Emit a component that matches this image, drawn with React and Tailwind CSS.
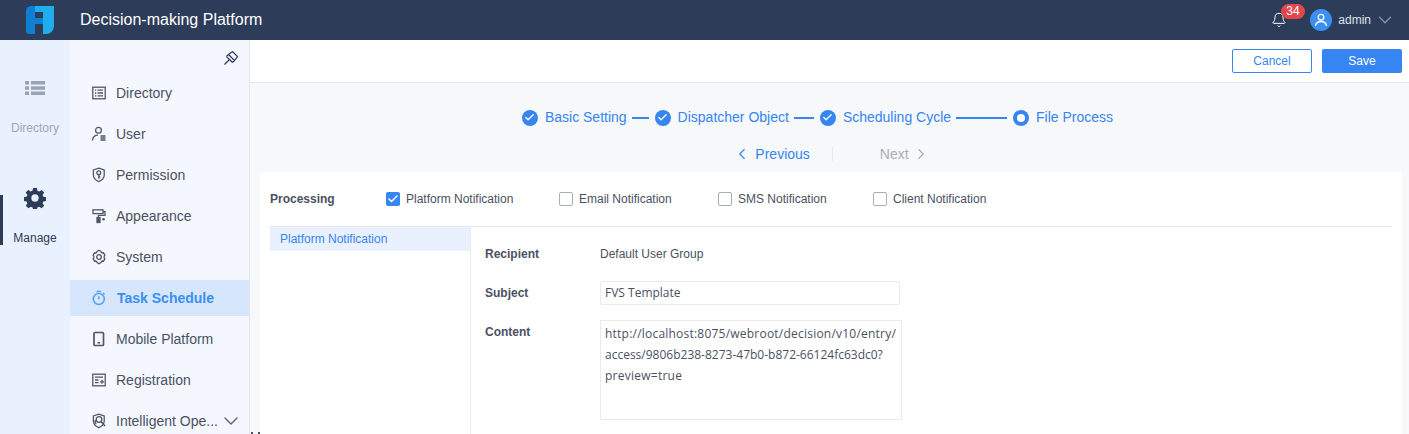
import { ChevronDown, ChevronLeft, ChevronRight, Check, Bell } from "lucide-react";

const navItems = [
  { label: "Directory", icon: "directory" },
  { label: "User", icon: "user" },
  { label: "Permission", icon: "permission" },
  { label: "Appearance", icon: "appearance" },
  { label: "System", icon: "system" },
  { label: "Task Schedule", icon: "timer", active: true },
  { label: "Mobile Platform", icon: "mobile" },
  { label: "Registration", icon: "registration" },
  { label: "Intelligent Ope...", icon: "intelligent", arrow: true },
];

const steps = [
  { label: "Basic Setting", line: "w-[17px]" },
  { label: "Dispatcher Object", line: "w-[20px]" },
  { label: "Scheduling Cycle", line: "w-[51px]" },
];

function NavIcon({ name }) {
  const common = { width: 16, height: 16, viewBox: "0 0 16 16", fill: "none", stroke: "currentColor", strokeWidth: 1.3 };
  if (name === "directory")
    return (
      <svg {...common}>
        <rect x="1.800" y="2.200" width="12.400" height="11.600" />
        <path d="M4 5.200h1.300M6.500 5.200H12M4 8h1.300M6.500 8H12M4 10.800h1.300M6.500 10.800H12" />
      </svg>
    );
  if (name === "user")
    return (
      <svg {...common}>
        <circle cx="7.500" cy="4.200" r="2.900" />
        <path d="M1.500 14.500c.3-3.400 2.400-5.400 5.500-5.400M9.500 10h5M9.500 12h5M9.500 14h5" />
      </svg>
    );
  if (name === "permission")
    return (
      <svg {...common}>
        <path d="M7.800 1.200l5.400 1.700v5.300c0 3-2.300 5-5.400 6.500-3.100-1.500-5.400-3.500-5.400-6.500V2.900z" />
        <circle cx="7.800" cy="5.800" r="1.900" />
        <path d="M7.800 7.700v4M7.800 9.800h1.600" />
      </svg>
    );
  if (name === "appearance")
    return (
      <svg {...common}>
        <rect x="2" y="1.800" width="10" height="3.800" />
        <path d="M12 3.600h2v3.800H7.500v2.200" />
        <rect x="6" y="9.500" width="3" height="5" fill="currentColor" />
        <circle cx="12.500" cy="11.300" r="1.300" fill="currentColor" stroke="none" />
      </svg>
    );
  if (name === "system")
    return (
      <svg {...common}>
        <path d="M8 1.300l2 1.100.3 1 1 .6 1.200-.2 1.400 2.400-.7 1v1.600l.7 1-1.400 2.400-1.200-.2-1 .6-.3 1-2 1.100-2-1.100-.3-1-1-.6-1.200.2-1.400-2.400.7-1V7.200l-.7-1 1.400-2.400 1.200.2 1-.6.3-1z" />
        <circle cx="8" cy="8" r="2.300" />
      </svg>
    );
  if (name === "timer")
    return (
      <svg {...common}>
        <circle cx="7.800" cy="9" r="5.500" strokeWidth="1.500" />
        <path d="M5.500 1.500h4.600M12 3l1.500 1.500M7.800 6.200v3" strokeWidth="1.500" />
      </svg>
    );
  if (name === "mobile")
    return (
      <svg {...common}>
        <rect x="3" y="1.500" width="9.500" height="13" rx="1" strokeWidth="1.700" />
        <path d="M6.500 11.800h2.500" strokeWidth="1.500" />
      </svg>
    );
  if (name === "registration")
    return (
      <svg {...common}>
        <rect x="1.800" y="2.200" width="12.400" height="11.600" />
        <path d="M4 5.200h8M4 8h3.500M4 10.700h3.500M9 9.800h4M11 7.800v4" />
      </svg>
    );
  return (
    <svg {...common}>
      <path d="M7.800 1.200l5.400 1.700v5.300c0 3-2.300 5-5.400 6.500-3.100-1.500-5.400-3.500-5.400-6.500V2.900z" />
      <circle cx="8" cy="6.500" r="2.800" />
      <path d="M10 8.600l4 4.400M5 11c-.8-1-1-2.400-.7-3.800" strokeWidth="1.500" />
    </svg>
  );
}

function StepDot({ done }) {
  return (
    <span className="flex h-[16px] w-[16px] items-center justify-center rounded-full bg-[#3685f2]">
      {done ? <Check className="h-[11px] w-[11px] text-white" strokeWidth={3} /> : <span className="h-[8px] w-[8px] rounded-full bg-white" />}
    </span>
  );
}

function CheckOption({ label, checked, className }) {
  return (
    <label className={"flex items-center " + className}>
      {checked ? (
        <span className="flex h-[14px] w-[14px] items-center justify-center rounded-[2px] bg-[#3685f2]">
          <Check className="h-[12px] w-[12px] text-white" strokeWidth={3} />
        </span>
      ) : (
        <span className="h-[14px] w-[14px] rounded-[2px] border border-[#a8adb8] bg-white" />
      )}
      <span className="ml-[6px] text-[12px] text-[#4a5162]">{label}</span>
    </label>
  );
}

export default function App() {
  return (
    <div className="flex h-[434px] w-[1409px] flex-col overflow-hidden bg-[#f7f8fa] font-['Liberation_Sans',Arial,sans-serif]">
      {/* Header */}
      <header className="flex h-10 shrink-0 items-center bg-[#2c3c59] pr-[13px] text-white">
        <svg className="ml-[26px]" width="28" height="28" viewBox="0 0 28 28">
          <path d="M5 0h4v28H3a3 3 0 0 1-3-3V5a5 5 0 0 1 5-5z" fill="#0f7fd3" />
          <path d="M9 12h8v6H9z" fill="#0f7fd3" />
          <path d="M9 0h19v20a8 8 0 0 1-8 8h-3V6H9z" fill="#1eaeee" />
        </svg>
        <span className="ml-[26px] text-[16px]">Decision-making Platform</span>
        <div className="ml-auto flex items-center">
          <div className="relative mr-[23px]">
            <Bell className="h-[16px] w-[16px] text-white" strokeWidth={1.5} />
            <span className="absolute -top-[8px] left-[10px] rounded-full bg-[#e2474c] px-[5px] text-[12px] leading-[15px] text-white">34</span>
          </div>
          <span className="flex h-[22px] w-[22px] items-center justify-center rounded-full bg-[#3a8ff0]">
            <svg width="14" height="14" viewBox="0 0 14 14" fill="none" stroke="white" strokeWidth="1.300">
              <circle cx="7" cy="4.200" r="2.800" />
              <path d="M1.500 13c.4-3 2.600-4.500 5.500-4.500s5.100 1.500 5.500 4.500" />
            </svg>
          </span>
          <span className="ml-[6px] text-[12px] text-[#dfe3ea]">admin</span>
          <ChevronDown className="ml-[3px] h-[22px] w-[22px] text-[#8b95a8]" strokeWidth={1.4} />
        </div>
      </header>

      <div className="flex min-h-0 flex-1">
        {/* Rail */}
        <aside className="flex w-[70px] shrink-0 flex-col bg-[#eaf1fe] pt-[40px]">
          <div className="flex flex-col items-center">
            <svg width="20" height="16" viewBox="0 0 20 16" fill="#9aa3b5">
              <rect x="0" y="1" width="4" height="3.500" />
              <rect x="6" y="1" width="14" height="3.500" />
              <rect x="0" y="6.300" width="4" height="3.500" />
              <rect x="6" y="6.300" width="14" height="3.500" />
              <rect x="0" y="11.500" width="4" height="3.500" />
              <rect x="6" y="11.500" width="14" height="3.500" />
            </svg>
            <span className="mt-[23px] text-[12px] text-[#a0a6b3]">Directory</span>
          </div>
          <div className="relative mt-[50px] flex flex-col items-center">
            <span className="absolute left-0 top-[8px] h-[50px] w-[3px] bg-[#2c3c59]" />
            <svg width="22" height="22" viewBox="0 0 24 24" fill="#2c3c59">
              <path fillRule="evenodd" d="M10 1h4l.6 3 2 .9 2.600-1.700 2.800 2.800-1.700 2.600.9 2 3 .6v4l-3 .6-.9 2 1.700 2.600-2.800 2.800-2.600-1.700-2 .9-.6 3h-4l-.6-3-2-.9-2.600 1.700-2.800-2.800 1.700-2.600-.9-2-3-.6v-4l3-.6.9-2L1.800 6l2.800-2.800 2.600 1.700 2-.9zM12 8a4 4 0 1 0 0 8 4 4 0 0 0 0-8z" />
            </svg>
            <span className="mt-[20px] text-[12px] text-[#2c3c59]">Manage</span>
          </div>
        </aside>

        {/* Menu */}
        <nav className="w-[180px] shrink-0 border-r border-[#e4e7ec] bg-[#f4f7fe]">
          <div className="flex h-[35px] items-center justify-end pr-[10px]">
            <svg width="16" height="16" viewBox="0 0 16 16" fill="none" stroke="#2c3c59" strokeWidth="1.200">
              <path d="M5.500 4.500L9.500 1.500l5 5-3 4zM3.500 6.500l6 6M5.500 4.500l-2 2M11.500 10.500l-2 2M6 10l-4.500 4.500M5.500 4.500l6 6" />
            </svg>
          </div>
          <ul className="flex flex-col gap-[5px]">
            {navItems.map((item) => (
              <li
                key={item.label}
                className={
                  "flex h-9 items-center pl-[21px] text-[14px] " +
                  (item.active ? "bg-[#d5e6fd] font-bold text-[#3a8ff0]" : "text-[#4a5162]")
                }
              >
                <span className={item.active ? "text-[#5aa2f3]" : "text-[#4f5668]"}>
                  <NavIcon name={item.icon} />
                </span>
                <span className={(item.active ? "ml-[10px]" : "ml-[9px]") + " whitespace-nowrap"}>{item.label}</span>
                {item.arrow && <ChevronDown className="ml-[1px] h-[24px] w-[24px] text-[#5a6172]" strokeWidth={1.4} />}
              </li>
            ))}
          </ul>
        </nav>

        {/* Main */}
        <main className="relative flex min-w-0 flex-1 flex-col">
          <div className="flex h-[43px] shrink-0 items-center justify-end gap-[10px] border-b border-[#e4e7ec] bg-white pr-[7px]">
            <button className="h-[24px] w-[80px] rounded-[2px] border border-[#3685f2] text-[12px] text-[#3685f2]">Cancel</button>
            <button className="h-[24px] w-[80px] rounded-[2px] bg-[#3685f2] text-[12px] text-white">Save</button>
          </div>

          <div className="flex flex-col items-center pt-[24px]">
            <div className="mr-[24px] flex items-center text-[14px] text-[#3685f2]">
              {steps.map((step) => (
                <div key={step.label} className="flex items-center">
                  <StepDot done />
                  <span className="ml-[7px]">{step.label}</span>
                  <span className={"ml-[5px] mr-[6px] h-[2px] bg-[#3685f2] " + step.line} />
                </div>
              ))}
              <StepDot />
              <span className="ml-[7px]">File Process</span>
            </div>
            <div className="ml-[4px] mt-[16px] flex h-[20px] items-center text-[14px]">
              <span className="flex items-center text-[#3685f2]">
                <ChevronLeft className="h-[18px] w-[18px]" strokeWidth={1.5} />
                <span className="ml-[4px]">Previous</span>
              </span>
              <span className="ml-[22px] mr-[47px] h-[14px] w-px bg-[#e8eaee]" />
              <span className="flex items-center text-[#a9adb5]">
                <span>Next</span>
                <ChevronRight className="ml-[3px] h-[18px] w-[18px]" strokeWidth={1.5} />
              </span>
            </div>
          </div>

          <section className="ml-[10px] mr-[7px] mt-[8px] min-h-0 flex-1 bg-white px-[10px]">
            <div className="flex h-[55px] items-center border-b border-[#e8eaee]">
              <span className="w-[116px] text-[12px] font-bold text-[#4a5162]">Processing</span>
              <CheckOption checked label="Platform Notification" className="w-[173px]" />
              <CheckOption label="Email Notification" className="w-[159px]" />
              <CheckOption label="SMS Notification" className="w-[155px]" />
              <CheckOption label="Client Notification" />
            </div>
            <div className="flex">
              <div className="h-[300px] w-[201px] shrink-0 border-r border-[#e8eaee]">
                <div className="flex h-[24px] items-center bg-[#eaf1fe] pl-[10px] text-[12px] text-[#3685f2]">Platform Notification</div>
              </div>
              <div className="flex-1 pl-[14px] text-[12px] text-[#4a5162]">
                <div className="flex h-[54px] items-center">
                  <span className="w-[115px] font-bold">Recipient</span>
                  <span>Default User Group</span>
                </div>
                <div className="flex items-start">
                  <span className="w-[115px] pt-[3px] font-bold">Subject</span>
                  <div className="flex h-[24px] w-[300px] items-center rounded-[2px] border border-[#e8eaee] pl-[4px] font-['Open_Sans',sans-serif]">FVS Template</div>
                </div>
                <div className="mt-[15px] flex items-start">
                  <span className="w-[115px] pt-[3px] font-bold">Content</span>
                  <div className="h-[100px] w-[302px] border border-[#e8eaee] px-[4px] pt-[2px] font-['Open_Sans',sans-serif] leading-[21px]">
                    <span className="tracking-[0.22px]">http://localhost:8075/webroot/decision/v10/entry/</span>
                    <br />
                    access/9806b238-8273-47b0-b872-66124fc63dc0?
                    <br />
                    <span className="tracking-[0.25px]">preview=true</span>
                  </div>
                </div>
              </div>
            </div>
          </section>

          {/* Cut-off handle at the bottom edge */}
          <span className="absolute bottom-0 left-[1px] h-[2px] w-[2px] bg-[#4a5162]" />
          <span className="absolute bottom-0 left-[8px] h-[2px] w-[2px] bg-[#4a5162]" />
        </main>
      </div>
    </div>
  );
}
